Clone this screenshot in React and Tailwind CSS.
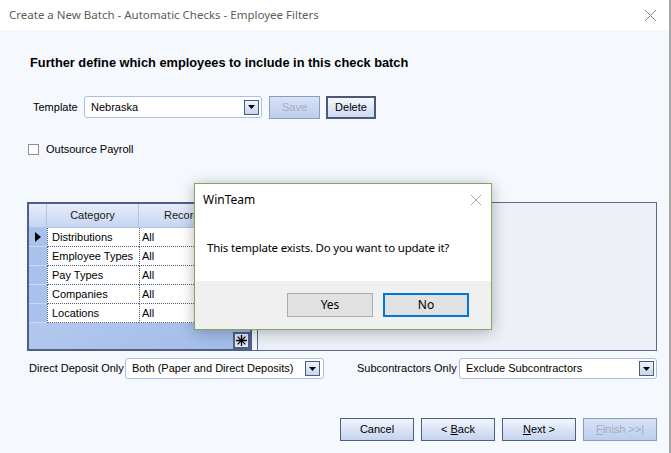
import React from "react";

const win = "font-['Liberation_Sans',Arial,sans-serif]";
const ui = "font-['Noto_Sans',sans-serif]";

const categories = ["Distributions", "Employee Types", "Pay Types", "Companies", "Locations"];

function DropArrow() {
	return (
		<span className="flex h-[15px] w-[15px] shrink-0 items-center justify-center border border-[#4a5b7c] bg-linear-to-b from-[#f0f4fb] to-[#c8d5ee]">
			<svg width="7" height="4" viewBox="0 0 7 4">
				<path d="M0 0h7L3.5 4z" fill="#000" />
			</svg>
		</span>
	);
}

function Combo({ value, className = "" }) {
	return (
		<div className={`flex items-center justify-between rounded-[3px] border border-[#a9bfe7] bg-white pl-[6px] pr-[2px] ${className}`}>
			<span className="whitespace-nowrap text-[11px] text-black">{value}</span>
			<DropArrow />
		</div>
	);
}

function WinButton({ children, disabled, strong, className = "" }) {
	let look = "border border-[#4f5f80] from-[#f3f6fc] to-[#c4d3ef] text-black";
	if (disabled) look = "border border-[#8a9cc0] from-[#d8e2f5] to-[#bccdee] text-[#a3acbf]";
	if (strong) look = "border-2 border-[#4b5877] from-[#f5f8fd] to-[#ccd9f1] text-black";
	return (
		<div className={`flex h-[23px] items-center justify-center whitespace-nowrap bg-linear-to-b text-[11px] ${look} ${className}`}>
			{children}
		</div>
	);
}

function Grid() {
	return (
		<div className="flex h-[149px] w-[630px]">
			<div className="flex w-[225px] flex-col border-2 border-[#4f6087] bg-linear-to-br from-[#bed1f2] to-[#a2bbe8]">
				<div className="flex h-[24px] border-b border-[#b3c5e6] bg-linear-to-b from-[#e6edf9] to-[#c5d5f1] text-[11px] text-[#1a1a1a]">
					<div className="w-[18px] border-r border-[#b3c5e6]" />
					<div className="flex w-[92px] items-center justify-center border-r border-[#b3c5e6]">Category</div>
					<div className="flex flex-1 items-center overflow-hidden whitespace-nowrap pl-[25px]">Records Included</div>
				</div>
				{categories.map((c, i) => (
					<div key={c} className="flex h-[19px] text-[11px] text-black">
						<div className="flex w-[18px] items-center justify-center border-b border-[#cbd8f0] bg-[#a9c2ec]">
							{i === 0 && (
								<svg width="6" height="10" viewBox="0 0 6 10">
									<path d="M0 0l6 5-6 5z" fill="#000" />
								</svg>
							)}
						</div>
						<div className="flex w-[92px] items-center whitespace-nowrap border-b border-l border-dotted border-[#4d5d80] bg-white pl-[4px]">{c}</div>
						<div className="flex flex-1 items-center border-b border-l border-dotted border-[#4d5d80] bg-white pl-[2px]">All</div>
					</div>
				))}
				<div className="flex flex-1 items-end justify-end">
					<div className="flex h-[17px] w-[17px] items-center justify-center border-2 border-[#4f6087] bg-[#dfe6f4]">
						<svg width="11" height="11" viewBox="0 0 11 11" stroke="#000" strokeWidth="1.3">
							<path d="M5.5 0v11M0 5.5h11M1.6 1.6l7.8 7.8M9.4 1.6l-7.8 7.8" />
						</svg>
					</div>
				</div>
			</div>
			<div className="flex flex-1 border-y border-r border-[#5a6a8a] bg-[#f1f4fa]">
				<div className="w-[5px]" />
				<div className="flex-1 border-l border-[#5a6a8a] bg-[#edf0f7]" />
			</div>
		</div>
	);
}

function Dialog() {
	return (
		<div className={`absolute left-[194px] top-[183px] flex h-[147px] w-[298px] flex-col border border-[#86a556] bg-white shadow-[0_2px_14px_rgba(0,0,0,0.28)] ${ui}`}>
			<div className="flex-1">
				<div className="flex h-[32px] items-center justify-between pl-[8px] pr-[10px]">
					<span className="text-[12px] text-black">WinTeam</span>
					<svg width="10" height="10" viewBox="0 0 10 10" stroke="#a8a8a8" strokeWidth="1">
						<path d="M0 0l10 10M10 0L0 10" />
					</svg>
				</div>
				<div className="mt-[24px] whitespace-nowrap pl-[12px] text-[11.5px] leading-[16px] tracking-[-0.2px] text-black">
					This template exists. Do you want to update it?
				</div>
			</div>
			<div className="flex h-[48px] items-start justify-end gap-[10px] bg-[#f0f0f0] pr-[22px] pt-[12px]">
				<div className="flex h-[24px] w-[86px] items-center justify-center border border-[#adadad] bg-[#e1e1e1] text-[12px] text-black">Yes</div>
				<div className="flex h-[24px] w-[86px] items-center justify-center border-2 border-[#0078d7] bg-[#e1e1e1] text-[12px] text-black">No</div>
			</div>
		</div>
	);
}

export default function App() {
	return (
		<div className={`relative flex h-[453px] w-[671px] flex-col overflow-hidden border-r-2 border-[#a6a6a6] bg-[#f5f8fd] ${win}`}>
			<div className={`flex h-[30px] shrink-0 items-center justify-between bg-white pl-[9px] pr-[13px] ${ui}`}>
				<span className="text-[11.5px] text-[#5c5c5c]">Create a New Batch - Automatic Checks - Employee Filters</span>
				<svg width="11" height="11" viewBox="0 0 11 11" stroke="#8a8a8a" strokeWidth="1">
					<path d="M0 0l11 11M11 0L0 11" />
				</svg>
			</div>

			<div className="flex flex-col pl-[27px] pr-[12px]">
				<h1 className="mt-[25px] pl-[3px] text-[12.8px] font-bold leading-[16px] text-black">
					Further define which employees to include in this check batch
				</h1>

				<div className="mt-[25px] flex h-[22px] items-center text-[11px]">
					<span className="w-[57px] pl-[6px] text-black">Template</span>
					<Combo value="Nebraska" className="h-[22px] w-[178px]" />
					<WinButton disabled className="ml-[7px] w-[51px]">Save</WinButton>
					<WinButton strong className="ml-[6px] w-[50px]">Delete</WinButton>
				</div>

				<div className="mt-[24px] flex h-[14px] items-center text-[11px]">
					<span className="ml-[1px] h-[11px] w-[11px] border border-[#8f8f8f] bg-white" />
					<span className="ml-[7px] text-black">Outsource Payroll</span>
				</div>

				<div className="mt-[46px]">
					<Grid />
				</div>

				<div className="mt-[7px] flex h-[21px] items-center text-[11px]">
					<span className="w-[98px] whitespace-nowrap pl-[2px] text-black">Direct Deposit Only</span>
					<Combo value="Both (Paper and Direct Deposits)" className="h-[21px] w-[199px] pr-[3px]" />
					<span className="ml-[33px] w-[102px] whitespace-nowrap text-black">Subcontractors Only</span>
					<Combo value="Exclude Subcontractors" className="h-[21px] w-[198px]" />
				</div>

				<div className="mt-[39px] flex justify-end gap-[7px]">
					<WinButton className="w-[74px]">Cancel</WinButton>
					<WinButton className="w-[74px]">
						&lt;&nbsp;<span className="underline">B</span>ack
					</WinButton>
					<WinButton className="w-[74px]">
						<span className="underline">N</span>ext &gt;
					</WinButton>
					<WinButton disabled className="w-[74px]">
						<span className="underline">F</span>inish &gt;&gt;|
					</WinButton>
				</div>
			</div>

			<Dialog />
		</div>
	);
}
